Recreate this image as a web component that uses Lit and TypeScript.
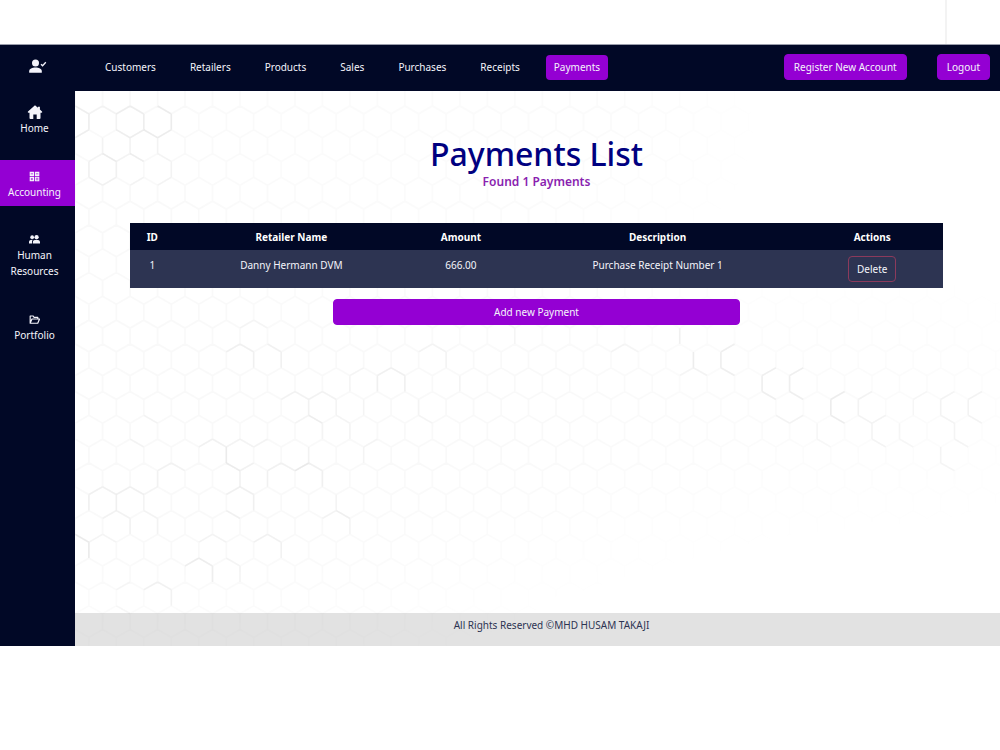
import { LitElement, html, svg, css } from "lit";
import { customElement, state } from "lit/decorators.js";

const HEX_W = 27.48;
const HEX_R = HEX_W / Math.sqrt(3);
const ROW_H = HEX_R * 1.5;
const ORIGIN_X = 27.6;
const ORIGIN_Y = 30.8;

/* Highlighted cells: row, column, sides (0 = upper right, clockwise), strength. */
const ACCENTS: Array<[number, number, number[], number]> = [
  [0, -1, [0, 1, 2], 0.075], [0, 0, [0, 5, 1], 0.04], [0, 1, [5, 0, 1, 2, 3], 0.075], [0, 2, [0, 1, 2, 3], 0.085],
  [1, 0, [1, 2], 0.04], [1, 1, [1, 2, 3], 0.04], [1, 2, [1, 3], 0.04],
  [2, 0, [0, 1, 2, 3, 4], 0.05], [2, 1, [0, 2], 0.04], [2, 2, [0, 1, 2], 0.04],
  [9, 6, [0, 5], 0.03], [9, 15, [0, 1], 0.03], [9, 21, [1], 0.07],
  [10, 5, [5, 0, 1], 0.06], [10, 6, [0, 1], 0.05], [10, 12, [5, 0, 1], 0.04],
  [10, 19, [5, 0], 0.04], [10, 21, [1, 2], 0.04], [10, 22, [4, 3], 0.05], [10, 23, [5, 4, 3], 0.08],
  [11, 10, [5, 4], 0.035], [11, 11, [5, 0, 1, 4], 0.06], [11, 13, [1], 0.03],
  [11, 25, [5, 4, 3], 0.08], [11, 26, [5, 4, 3], 0.08],
  [12, 7, [5, 0, 1], 0.045], [12, 8, [0, 5, 3], 0.045], [12, 9, [4, 1], 0.035], [12, 12, [4, 3], 0.035],
  [12, 25, [3, 2], 0.05], [12, 27, [5, 4, 3], 0.09], [12, 28, [5, 4, 3], 0.05], [12, 30, [5, 4], 0.03],
  [12, 31, [5, 4, 3], 0.05], [12, 32, [5, 4, 3], 0.06],
  [13, 2, [0, 3], 0.04], [13, 6, [2, 3], 0.04], [13, 8, [5, 0, 1], 0.035], [13, 9, [0, 1], 0.035],
  [13, 27, [4, 3], 0.03], [13, 29, [5, 4, 3], 0.05], [13, 30, [4, 3], 0.04], [13, 32, [4, 3], 0.05],
  [14, 4, [5, 0, 1], 0.055], [14, 5, [4, 5, 3], 0.04], [14, 7, [1, 2], 0.045], [14, 10, [5, 4], 0.035], [14, 31, [4, 3], 0.05],
  [15, 3, [5, 0, 4], 0.045], [15, 5, [0], 0.05], [15, 6, [5, 4], 0.05], [15, 7, [5, 0, 4], 0.05], [15, 8, [5, 0, 1], 0.06],
  [16, 0, [5, 0, 4, 1], 0.06], [16, 1, [5, 0], 0.06], [16, 2, [5, 4], 0.03], [16, 5, [5, 0, 1, 3], 0.06], [16, 9, [4, 3], 0.035],
  [17, 1, [5, 0, 1], 0.045], [17, 2, [0, 1], 0.04], [17, 9, [5, 0, 1], 0.04],
  [18, -1, [0, 1], 0.09], [18, 0, [5, 0], 0.035], [18, 4, [5, 0], 0.04], [18, 6, [5, 0, 1], 0.05],
  [19, 4, [5, 0, 1], 0.08], [19, 5, [0, 1], 0.04],
  [20, 2, [5, 0, 1], 0.06], [20, 1, [5, 3], 0.03],
];

const vertices = (row: number, col: number) => {
  const cx = ORIGIN_X + col * HEX_W - (row % 2 ? HEX_W / 2 : 0);
  const cy = ORIGIN_Y + row * ROW_H;
  return Array.from({ length: 6 }, (_, i) => {
    const a = ((i * 60 - 90) * Math.PI) / 180;
    return [(cx + HEX_R * Math.cos(a)).toFixed(1), (cy + HEX_R * Math.sin(a)).toFixed(1)];
  });
};

const sides = (row: number, col: number, which: number[]) => {
  const v = vertices(row, col);
  return which.map((s) => `M${v[s]}L${v[(s + 1) % 6]}`).join("");
};

let gridPath = "";
for (let r = -1; r < 23; r++) {
  for (let c = -2; c < 36; c++) gridPath += sides(r, c, [0, 5, 4]);
}

@customElement("honeycomb-backdrop")
export class HoneycombBackdrop extends LitElement {
  static styles = css`
    :host { display: block; overflow: hidden; contain: size; }
    .art { display: block; width: 100%; height: 100%; fill: none; stroke: #000; }
  `;

  render() {
    return html`<svg class="art" aria-hidden="true">
      <defs>
        <filter id="soft" x="-50%" y="-50%" width="200%" height="200%"><feGaussianBlur stdDeviation="45" /></filter>
        <mask id="fade" maskUnits="userSpaceOnUse" x="0" y="0" width="925" height="560">
          <g filter="url(#soft)" stroke="none">
            <path fill="#fff" fill-opacity=".55" d="M-90-90H560L650 60L480 150L640 220L930 250V370L700 390L480 450L300 540H-90Z" />
            <path fill="#fff" fill-opacity=".5" d="M-90-90H110L150 180L160 240L540 250L520 370L300 400L200 500H-90Z" />
          </g>
        </mask>
      </defs>
      <path mask="url(#fade)" stroke-width="1.8" stroke-opacity=".032" d=${gridPath} />
      ${ACCENTS.map(
        ([r, c, s, o]) => svg`<path stroke-width="1.7" stroke-opacity=${o * 0.6} d=${sides(r, c, s)} />`
      )}
    </svg>`;
  }
}

const icons = {
  user: svg`<circle cx="6.5" cy="4" r="3.5"/><path d="M.2 13.8v-1.5C.2 9.7 3.2 8.600 6.500 8.600s6.300 1.100 6.300 3.700v1.500z"/><path d="m12 5.200 1.600 1.600 3.200-3.600" fill="none" stroke="currentColor" stroke-width="1.300"/>`,
  home: svg`<path d="M8 1.200 10.900 3.800V2.700h2v2.900L15 7.500c.5.500.2 1.200-.4 1.200H13.500v5.300c0 .6-.3.900-.9.900H9.700v-4.300H6.300v4.300H3.400c-.6 0-.9-.3-.9-.9V8.700H1.400C.8 8.700.5 8 1 7.500Z"/>`,
  accounting: svg`<path d="M1 1h6.400v6.200H1zM8.600 1H15v6.200H8.600zM1 8.400h6.400V15H1zM8.600 8.400H15V15H8.600z"/><path d="M2.500 4.100h3.400M2.600 11.700h3.200M4.200 10.100v3.200M10 4.100h3.600M10 10.600h3.600M10 12.800h3.600" stroke="#9400d3" stroke-width="1"/>`,
  people: svg`<circle cx="4.600" cy="4.600" r="2.700"/><circle cx="11" cy="4.600" r="3.100"/><path d="M0 13.800v-2.200C0 9.600 2 8.300 4.500 8.300l1 .1C4.600 9.400 4.400 10.300 4.400 11.400v2.400zM5.600 13.800v-1.900c0-2.300 2.200-3.400 5.200-3.400s5.200 1.100 5.200 3.400v1.900z"/>`,
  folder: svg`<path d="M1.700 13.500V2.900h4.100l1.600 1.900h5.400v2.300M1.700 13.500 4.300 7.300h11L12.700 13.500z" fill="none" stroke="currentColor" stroke-width="1.700" stroke-linejoin="round"/>`,
};

@customElement("app-root")
export class AppRoot extends LitElement {
  @state() private payments = [
    { id: 1, retailer: "Danny Hermann DVM", amount: "666.00", description: "Purchase Receipt Number 1" },
  ];

  private tabs = ["Customers", "Retailers", "Products", "Sales", "Purchases", "Receipts", "Payments"];

  private sections = [
    { label: "Home", icon: icons.home, big: true },
    { label: "Accounting", icon: icons.accounting, active: true },
    { label: "Human Resources", icon: icons.people },
    { label: "Portfolio", icon: icons.folder },
  ];

  static styles = css`
    :host {
      display: block;
      min-height: 100vh;
      background: #fff;
      color: #f4f4fb;
      font: 10px/16px "Noto Sans", "Open Sans", sans-serif;
    }
    * { box-sizing: border-box; }
    a { color: inherit; text-decoration: none; }
    button { font: inherit; color: inherit; cursor: pointer; }
    .strip { height: 44px; padding-right: 53px; }
    .strip-edge { height: 100%; border-right: 2px solid #f3f3f3; }
    .shell { display: grid; grid-template-columns: 75px 1fr; border-top: 1px solid #9a9dab; }
    .rail { background: #010826; display: flex; flex-direction: column; gap: 8px; }
    .profile { height: 43px; display: grid; place-items: center; }
    .rail-links { display: flex; flex-direction: column; gap: 17px; }
    .rail-link {
      display: flex; flex-direction: column; align-items: center;
      padding: 8px 6px 7px 0; text-align: center;
    }
    .rail-link.active { background: #9400d3; padding-bottom: 6px; }
    .icon { fill: currentColor; width: 11px; height: 11px; margin: 3px 0 2px; }
    .icon.big { width: 16px; height: 16px; margin: 0; }
    .icon.profile-icon { width: 18px; height: 15px; margin: 0; }
    .stage { display: flex; flex-direction: column; min-width: 0; }
    .topbar {
      background: #010826; min-height: 46px; padding: 0 10px 2px 22px;
      display: flex; justify-content: space-between; align-items: center;
    }
    .tabs { display: flex; gap: 18px; }
    .session { display: flex; gap: 30px; }
    .tab { padding: 4px 8px 5px; border-radius: 4px; }
    .tab.active { background: #9400d3; }
    .btn { border: 1px solid #9400d3; border-radius: 4px; background: #9400d3; padding: 4px 8px; white-space: nowrap; }
    .session .btn { padding: 4px 9px; }
    .btn.danger { background: transparent; border-color: #8c3a5c; }
    .btn.wide { width: 50%; }
    .canvas { display: grid; flex: 1; }
    .canvas > * { grid-area: 1 / 1; min-width: 0; }
    .content { display: flex; flex-direction: column; min-height: 555px; isolation: isolate; }
    .main { flex: 1; padding: 43px 57px 0 55px; display: flex; flex-direction: column; align-items: center; }
    .title { margin: 0; font-size: 32px; line-height: 40px; font-weight: 500; color: #000080; }
    .count { margin: 0 0 33px; font-size: 12px; line-height: 16px; font-weight: 600; color: #8a1fb0; }
    .list { width: 100%; border-collapse: collapse; table-layout: fixed; background: #2d3452; margin-bottom: 11px; }
    .c-id { width: 5.5%; } .c-name { width: 28.7%; } .c-amount { width: 13%; } .c-desc { width: 35.4%; }
    .list th { background: #010826; color: #fff; font-weight: 700; padding: 6px 0 5px; }
    .list td { padding: 6px 0; vertical-align: top; text-align: center; }
    .value { display: block; padding-top: 1px; }
    .footer { background: rgba(1, 1, 1, 0.115); color: #2d3452; padding: 4px 0 13px 28px; text-align: center; }
  `;

  private glyph(body: unknown, cls = "", box = "0 0 16 16") {
    return html`<svg class="icon ${cls}" viewBox=${box} aria-hidden="true">${body}</svg>`;
  }

  private remove(id: number) {
    this.payments = this.payments.filter((p) => p.id !== id);
  }

  render() {
    return html`
      <div class="strip"><div class="strip-edge"></div></div>
      <div class="shell">
        <aside class="rail">
          <a class="profile" href="#profile" aria-label="Profile">${this.glyph(icons.user, "profile-icon", "0 0 18 15")}</a>
          <nav class="rail-links" aria-label="Sections">
            ${this.sections.map(
              (s) => html`<a class="rail-link ${s.active ? "active" : ""}" href="#">${this.glyph(s.icon, s.big ? "big" : "")}<span>${s.label}</span></a>`
            )}
          </nav>
        </aside>
        <div class="stage">
          <header class="topbar">
            <nav class="tabs" aria-label="Accounting">
              ${this.tabs.map((t) => html`<a class="tab ${t === "Payments" ? "active" : ""}" href="#">${t}</a>`)}
            </nav>
            <div class="session">
              <button class="btn">Register New Account</button>
              <button class="btn">Logout</button>
            </div>
          </header>
          <div class="canvas">
            <honeycomb-backdrop></honeycomb-backdrop>
            <div class="content">
              <main class="main">
                <h1 class="title">Payments List</h1>
                <p class="count">Found ${this.payments.length} Payments</p>
                <table class="list">
                  <colgroup><col class="c-id" /><col class="c-name" /><col class="c-amount" /><col class="c-desc" /><col /></colgroup>
                  <thead><tr><th>ID</th><th>Retailer Name</th><th>Amount</th><th>Description</th><th>Actions</th></tr></thead>
                  <tbody>
                    ${this.payments.map(
                      (p) => html`<tr>
                        <td><span class="value">${p.id}</span></td>
                        <td><span class="value">${p.retailer}</span></td>
                        <td><span class="value">${p.amount}</span></td>
                        <td><span class="value">${p.description}</span></td>
                        <td><button class="btn danger" @click=${() => this.remove(p.id)}>Delete</button></td>
                      </tr>`
                    )}
                  </tbody>
                </table>
                <button class="btn wide">Add new Payment</button>
              </main>
              <footer class="footer">All Rights Reserved ©MHD HUSAM TAKAJI</footer>
            </div>
          </div>
        </div>
      </div>
    `;
  }
}
